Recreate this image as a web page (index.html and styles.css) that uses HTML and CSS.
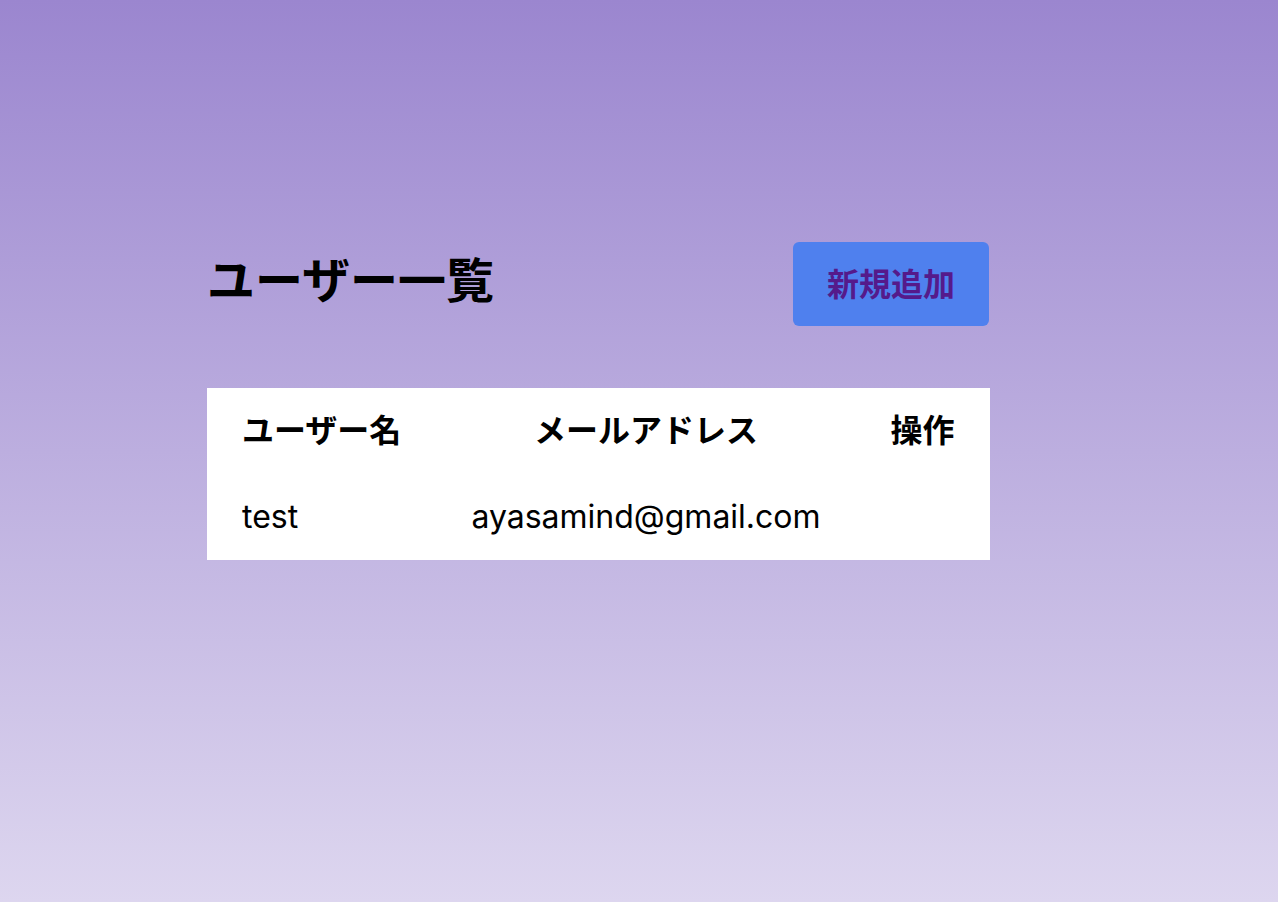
FILE: index.html
```html
<!DOCTYPE html>
<html lang="ja">
<head>
<meta charset="utf-8">
<title>ユーザー一覧</title>
<link rel="stylesheet" href="styles.css">
</head>
<body>
<div class="page">
  <div class="container">
    <div class="header">
      <h1 class="title">ユーザー一覧</h1>
      <a class="add-btn" href="#">新規追加</a>
    </div>
    <table class="users">
      <thead>
        <tr><th class="col-name">ユーザー名</th><th class="col-mail">メールアドレス</th><th class="col-op">操作</th></tr>
      </thead>
      <tbody>
        <tr><td>test</td><td>ayasamind@gmail.com</td><td></td></tr>
      </tbody>
    </table>
  </div>
</div>
</body>
</html>
```
FILE: styles.css
```css
html, body {
  margin: 0;
  padding: 0;
  height: 100%;
}
body {
  font-family: Inter, "Noto Sans CJK JP", sans-serif;
  background: linear-gradient(to bottom, #9b86cf 0%, #ddd6ef 100%);
  color: #000;
}
.page {
  min-height: 100%;
  display: flex;
  padding: 242px 0 0 207px;
  box-sizing: border-box;
}
.container {
  width: 782px;
}
.header {
  display: flex;
  justify-content: space-between;
  align-items: center;
  height: 84px;
}
.title {
  margin: 0 0 6px;
  font-size: 48px;
  font-weight: 700;
  line-height: 1;
}
.add-btn {
  display: flex;
  align-items: center;
  justify-content: center;
  width: 196px;
  height: 84px;
  box-sizing: border-box;
  background: #4f80ee;
  border-radius: 6px;
  color: #551a8b;
  text-decoration: none;
  font-size: 32px;
  font-weight: 700;
  padding-bottom: 4px;
}
.users {
  margin-top: 62px;
  width: 100%;
  background: #fff;
  border-collapse: collapse;
  font-size: 32px;
}
.users th, .users td {
  padding: 0 35px;
  height: 86px;
  line-height: 40px;
  white-space: nowrap;
}
.users th {
  font-weight: 700;
  text-align: center;
}
.users td {
  font-weight: 400;
  text-align: left;
}
.users th.col-name { text-align: left; }
.users th.col-op { text-align: right; }
```
